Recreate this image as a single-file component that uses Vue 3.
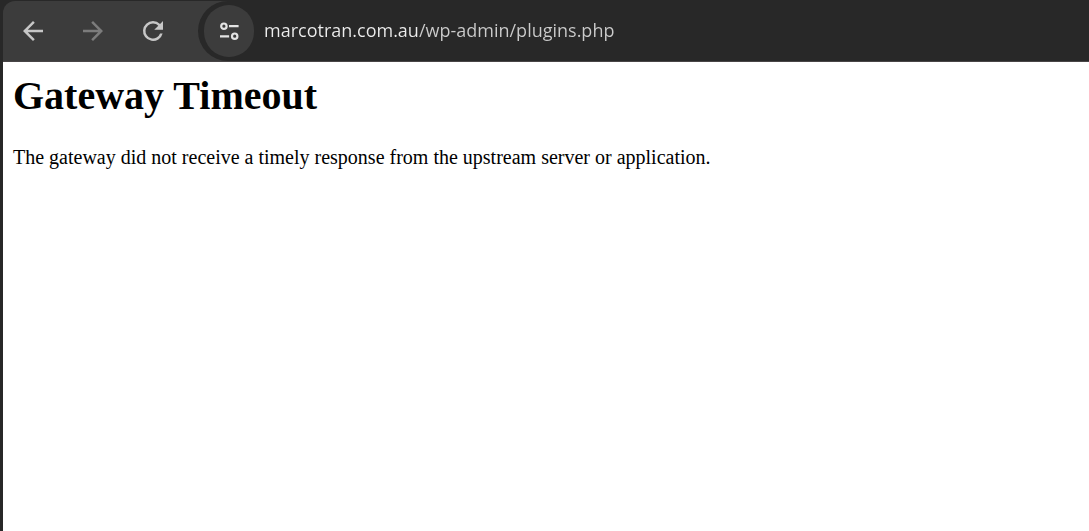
<script setup>
import { ref } from 'vue'

const address = ref('marcotran.com.au/wp-admin/plugins.php')
</script>

<template>
  <div class="window">
    <header class="toolbar">
      <nav class="nav" aria-label="Browser navigation">
        <button class="nav-button" type="button" aria-label="Back">
          <svg viewBox="0 0 24 24" aria-hidden="true">
            <path d="M20 11H7.83l5.59-5.59L12 4l-8 8 8 8 1.41-1.41L7.83 13H20v-2z" />
          </svg>
        </button>
        <button class="nav-button muted" type="button" aria-label="Forward">
          <svg viewBox="0 0 24 24" aria-hidden="true">
            <path d="M12 4l-1.41 1.41L16.17 11H4v2h12.17l-5.58 5.59L12 20l8-8z" />
          </svg>
        </button>
        <button class="nav-button" type="button" aria-label="Reload">
          <svg viewBox="0 0 24 24" aria-hidden="true">
            <path d="M17.65 6.35A7.96 7.96 0 0 0 12 4a8 8 0 1 0 7.73 10h-2.08A6 6 0 1 1 12 6c1.66 0 3.14.69 4.22 1.78L13 11h7V4z" />
          </svg>
        </button>
      </nav>
      <div class="omnibox">
        <button class="site-info" type="button" aria-label="View site information">
          <svg viewBox="0 0 20 20" aria-hidden="true">
            <circle cx="4.9" cy="5.2" r="2.7" />
            <path d="M10 5.2H19.6M1 15.4H10.1" />
            <circle cx="15.7" cy="15.2" r="2.7" />
          </svg>
        </button>
        <input v-model="address" class="address" type="text" aria-label="Address" spellcheck="false" />
      </div>
    </header>
    <main class="page">
      <h1>Gateway Timeout</h1>
      <p>The gateway did not receive a timely response from the upstream server or application.</p>
    </main>
  </div>
</template>

<style>
body {
  margin: 0;
  background: #282828;
}
</style>

<style scoped>
.window {
  box-sizing: border-box;
  display: flex;
  flex-direction: column;
  min-height: 100vh;
  padding: 1px 0 0 3px;
  background: #282828;
}

.toolbar {
  display: flex;
  align-items: center;
  background: #3c3c3c;
  border-bottom: 1px solid #484546;
  border-top-left-radius: 12px;
}

.nav {
  display: flex;
  gap: 30px;
  padding: 0 30px 0 15px;
}

.nav-button {
  width: 30px;
  height: 30px;
  padding: 0;
  border: 0;
  background: none;
  color: #c7c7c7;
}

.nav-button.muted {
  color: #7c7c7c;
}

.nav-button svg {
  display: block;
  width: 30px;
  height: 30px;
  fill: currentColor;
}

.omnibox {
  box-sizing: border-box;
  display: flex;
  flex: 1;
  align-items: center;
  gap: 10px;
  height: 60px;
  padding-left: 6px;
  border-radius: 30px 0 0 30px;
  background: #282828;
}

.site-info {
  display: grid;
  flex: none;
  place-items: center;
  width: 50px;
  height: 52px;
  padding: 0;
  border: 0;
  border-radius: 26px;
  background: #3c3c3c;
}

.site-info svg {
  width: 20px;
  height: 20px;
  fill: none;
  stroke: #e3e3e3;
  stroke-width: 2.2;
}

/* The host is drawn brighter than the path that follows it. */
.address {
  flex: 1;
  min-width: 0;
  height: 30px;
  margin-bottom: 2px;
  padding: 0;
  border: 0;
  outline: 0;
  background: linear-gradient(to right, #eeeeee 154px, #cccccc 154px);
  background-clip: text;
  -webkit-background-clip: text;
  color: transparent;
  caret-color: #eeeeee;
  font: 18px/30px "Segoe UI", "Open Sans", sans-serif;
}

.page {
  flex: 1;
  padding: 11px 10px;
  background: #fff;
  color: #000;
  font-family: "Liberation Serif", "Times New Roman", serif;
}

h1 {
  margin: 0;
  font-size: 40px;
  line-height: 46px;
}

p {
  margin: 26px 0 0;
  font-size: 20px;
  line-height: 24px;
}
</style>
